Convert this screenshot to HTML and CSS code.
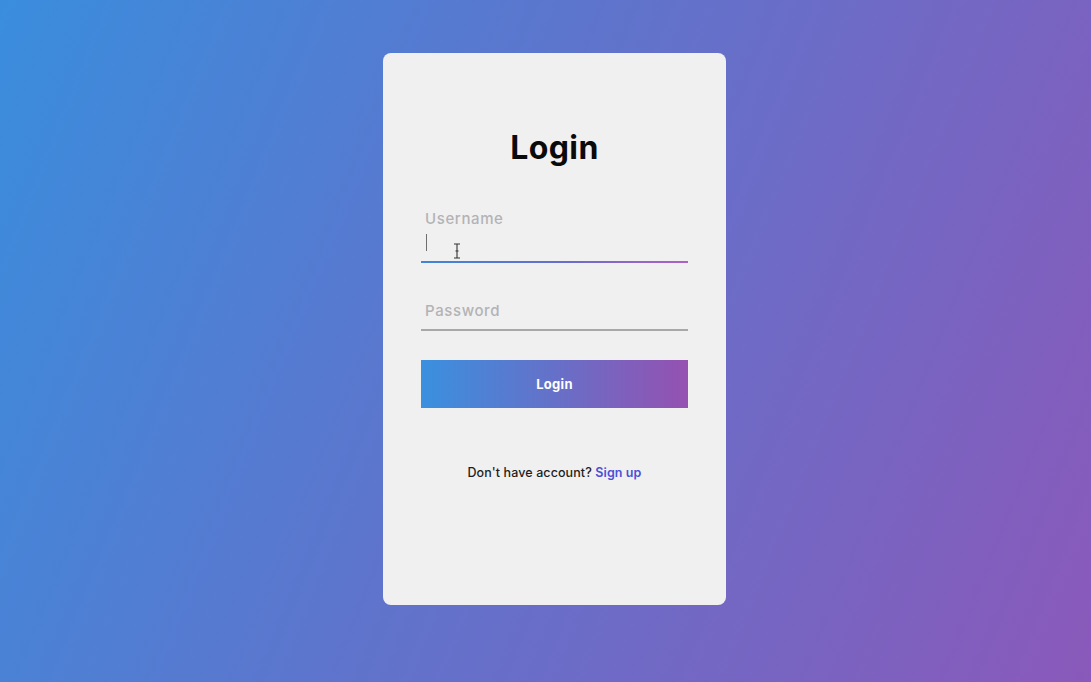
FILE: index.html
```html
<!DOCTYPE html>
<html lang="en">
<head>
<meta charset="utf-8">
<title>Login</title>
<link rel="stylesheet" href="styles.css">
</head>
<body>
<main class="card">
  <h1 class="title">Login</h1>
  <div class="field field-active">
    <label class="field-label">Username</label>
    <div class="field-input"><span class="caret"></span></div>
  </div>
  <div class="field field-idle">
    <span class="field-placeholder">Password</span>
  </div>
  <button class="btn" type="button">Login</button>
  <p class="signup">Don't have account? <a class="signup-link" href="#">Sign up</a></p>
  <svg class="ibeam" width="8" height="16" viewBox="0 0 8 16" aria-hidden="true">
    <path d="M1 1h2.5l0.5 0.6 0.5-0.6H7M4 1.6V14.4M1 15h2.5l0.5-0.6 0.5 0.6H7M2.5 8h3" fill="none" stroke="#333" stroke-width="1.1"/>
  </svg>
</main>
</body>
</html>
```

FILE: styles.css
```css
* { box-sizing: border-box; }

html, body { height: 100%; }

body {
  margin: 0;
  font-family: Inter, "Noto Sans", "DejaVu Sans", sans-serif;
  background: linear-gradient(112deg, #3a8ddd 0%, #5f74cc 45%, #8a59ba 100%);
  display: flex;
  justify-content: center;
  align-items: flex-start;
  padding-top: 53px;
  padding-left: 18px;
}

.card {
  position: relative;
  width: 343px;
  height: 552px;
  background: #f0f0f1;
  border-radius: 8px;
  padding: 77px 38px 0;
  display: flex;
  flex-direction: column;
}

.title {
  margin: 0;
  font-size: 32px;
  line-height: 36px;
  font-weight: 700;
  color: #0a0a0a;
  text-align: center;
  letter-spacing: 0.4px;
}

.field {
  padding: 0 4px;
}

.field-active {
  margin-top: 44px;
  border-bottom: 2px solid transparent;
  border-image: linear-gradient(to right, #3d86d8, #6a6ccb 55%, #b060c8) 1;
}

.field-label,
.field-placeholder {
  display: block;
  font-size: 15px;
  line-height: 18px;
  font-weight: 500;
  color: #b3b3b5;
  letter-spacing: 0.6px;
}

.field-input {
  height: 33px;
  padding-top: 6px;
  padding-left: 1px;
}

.caret {
  display: block;
  width: 1px;
  height: 17px;
  background: #6e6e6e;
}

.field-idle {
  margin-top: 39px;
  padding-bottom: 9px;
  border-bottom: 2px solid #a8a8aa;
}

.btn {
  margin-top: 29px;
  height: 48px;
  border: 0;
  border-radius: 0;
  background: linear-gradient(to right, #3a90df, #6670c8 50%, #9551b1);
  color: #fff;
  font-family: inherit;
  font-size: 13px;
  font-weight: 700;
  letter-spacing: 0.3px;
}

.signup {
  margin: 57px 0 0;
  font-size: 12.5px;
  line-height: 16px;
  font-weight: 500;
  color: #1e1e1e;
  text-align: center;
  letter-spacing: 0.1px;
}

.signup-link {
  color: #4c4fd8;
  text-decoration: none;
  font-weight: 600;
}

.ibeam {
  position: absolute;
  left: 70px;
  top: 190px;
}
```
